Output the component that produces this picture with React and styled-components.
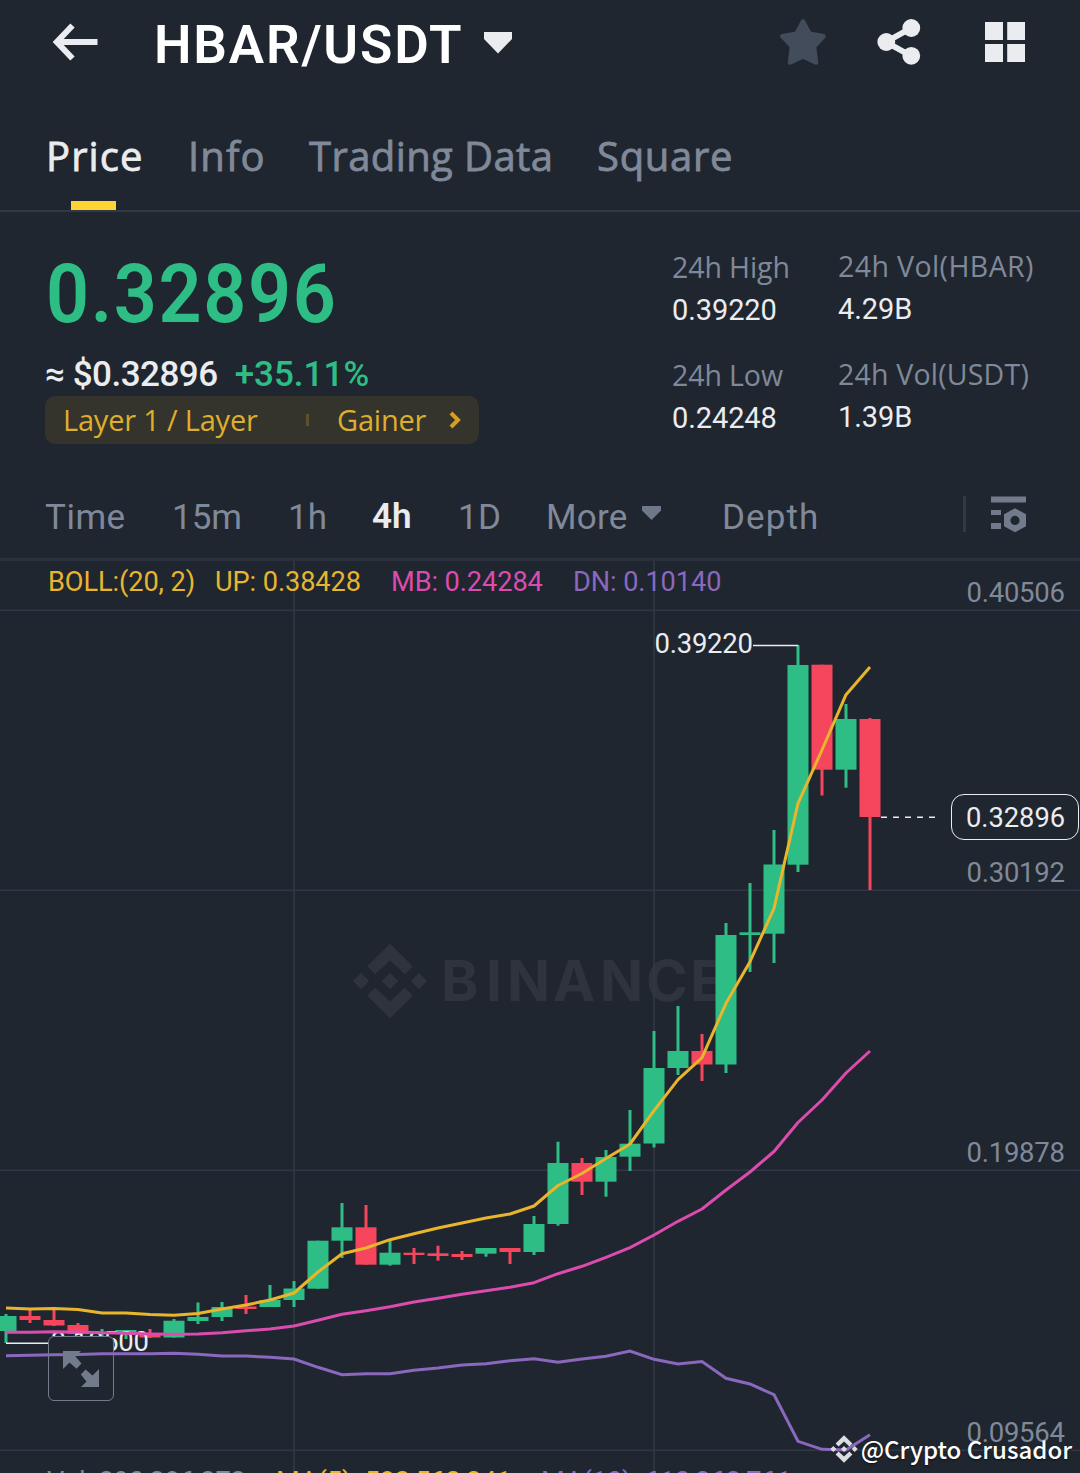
import React from "react";
import styled, { createGlobalStyle, css } from "styled-components";

const colors = {
  bg: "#1f262f",
  line: "#313744",
  text: "#eaecef",
  muted: "#808999",
  green: "#2ebd85",
  red: "#f6465d",
  yellow: "#e9b52c",
  pink: "#dc4bae",
  purple: "#8a68bd",
};

// [side, body top, body bottom, wick top, wick bottom]
const candles = [
  ["up", 1316, 1331, 1314, 1343],
  ["down", 1316, 1320, 1310, 1323],
  ["down", 1320, 1325.5, 1310, 1326],
  ["down", 1325, 1334, 1323, 1335],
  ["up", 1332, 1334, 1329, 1336],
  ["up", 1330, 1332.5, 1330, 1339],
  ["down", 1333, 1337.5, 1329, 1338],
  ["up", 1320.7, 1337.5, 1319, 1337.5],
  ["up", 1317, 1321, 1302.5, 1324],
  ["up", 1307, 1317, 1302, 1321],
  ["down", 1306.5, 1309, 1295, 1314],
  ["up", 1300, 1307, 1285, 1307],
  ["up", 1288.5, 1300, 1281, 1307],
  ["up", 1240.7, 1288.7, 1240.7, 1288.7],
  ["up", 1227.3, 1240.7, 1203, 1258],
  ["down", 1227.3, 1264.7, 1205, 1264.7],
  ["up", 1252.7, 1264.7, 1241, 1265.7],
  ["down", 1252.7, 1255, 1248, 1264],
  ["down", 1253.3, 1256, 1245.7, 1260.7],
  ["down", 1254, 1257, 1251, 1260],
  ["up", 1248, 1253.7, 1248, 1256.7],
  ["down", 1248, 1252, 1248, 1264],
  ["up", 1224, 1252, 1216, 1255],
  ["up", 1163, 1224, 1141.7, 1225.7],
  ["down", 1163, 1181.7, 1158, 1195],
  ["up", 1157, 1181.7, 1150, 1196.7],
  ["up", 1143.7, 1156.7, 1110, 1171],
  ["up", 1068, 1143.5, 1031, 1147.5],
  ["up", 1051, 1068, 1006, 1075],
  ["down", 1051, 1064.5, 1034, 1081],
  ["up", 935, 1064.5, 923, 1073],
  ["up", 932.3, 935, 883, 972],
  ["up", 864.5, 933.7, 830, 963],
  ["up", 665, 864.7, 645, 872],
  ["down", 664.7, 769.7, 664.7, 795.5],
  ["up", 719, 769.7, 704, 787.7],
  ["down", 719, 817, 718, 890],
];

const upper = [
  1308, 1309, 1308.5, 1309.5, 1313, 1313, 1314.5, 1315.3, 1313.5, 1309, 1305,
  1300, 1293, 1272, 1253.7, 1248, 1239.7, 1233.7, 1228, 1223, 1218, 1214, 1206,
  1185.5, 1173.5, 1158.5, 1144, 1110.7, 1079.7, 1057.7, 1003.3, 961.7, 908.3,
  803.3, 750, 694.7, 667,
];

const middle = [
  1332.3, 1332.3, 1331.7, 1332, 1332.7, 1333.3, 1334, 1334.3, 1334, 1332.7,
  1330.7, 1329, 1326, 1320.3, 1314.3, 1310.7, 1306.7, 1302, 1298.3, 1294.3,
  1290.7, 1287.3, 1282.7, 1273.7, 1266.3, 1257.3, 1247.7, 1235, 1221.3, 1209,
  1190, 1172, 1151.5, 1122.5, 1100, 1073, 1051,
];

const lower = [
  1355.7, 1355.3, 1354.7, 1354.5, 1353.7, 1353.7, 1353.7, 1353.3, 1354.3, 1356,
  1356, 1357.3, 1359, 1367.3, 1374.7, 1373.7, 1373.7, 1370.3, 1368, 1365,
  1363.7, 1360.7, 1358.7, 1362.3, 1359, 1356.3, 1351, 1359.3, 1364, 1361.5,
  1378.3, 1384, 1394.7, 1441.3, 1449.3, 1450, 1434.7,
];

const axis = [
  [610, "0.40506"],
  [890, "0.30192"],
  [1170, "0.19878"],
  [1450, "0.09564"],
];

const candleX = (i) => 6 + i * 24;
const toPoints = (values) => values.map((y, i) => `${candleX(i)},${y}`).join(" ");

function BinanceMark() {
  return (
    <>
      <path d="M0-37.3 22.8-14.8 14.8-6.8 0-20.5-14.8-6.8-22.8-14.8Z" />
      <path d="M0 37.3 22.8 14.8 14.8 6.8 0 20.5-14.8 6.8-22.8 14.8Z" />
      <path d="M0-8.2 8.2 0 0 8.2-8.2 0Z" />
      <path d="M-29-8.2-20.8 0-29 8.2-37.2 0Z" />
      <path d="M29-8.2 37.2 0 29 8.2 20.8 0Z" />
    </>
  );
}

function Header() {
  return (
    <HeaderBar>
      <BackIcon width="46" height="38" viewBox="0 0 46 38">
        <path d="M20.5 2.5 4.8 19 20.5 35.5M5 19H45.5" fill="none" stroke={colors.text} strokeWidth="6" />
      </BackIcon>
      <Pair>HBAR/USDT</Pair>
      <PairCaret width="28" height="22" viewBox="0 0 28 22">
        <path d="M0 0H28V7L14 21.5 0 7Z" fill={colors.text} />
      </PairCaret>
      <HeaderIcons>
        <svg width="46" height="46" viewBox="0 0 46 46">
          <path
            d="M23 2.5 29.6 14.8 43.5 17.2 34 27.6 36 43.5 23 37.4 10 43.5 12 27.6 2.5 17.2 16.4 14.8Z"
            fill="#434c5a"
            stroke="#434c5a"
            strokeWidth="4.5"
            strokeLinejoin="round"
          />
        </svg>
        <svg width="44" height="46" viewBox="0 0 44 46">
          <path d="M34.2 9 9 23 34.2 37" fill="none" stroke={colors.text} strokeWidth="6" />
          <g fill={colors.text}>
            <circle cx="9.3" cy="23" r="8.9" />
            <circle cx="34.3" cy="9" r="8.9" />
            <circle cx="34.3" cy="36.8" r="8.9" />
          </g>
        </svg>
        <svg width="40" height="40" viewBox="0 0 40 40" fill={colors.text}>
          <path d="M0 0H18V18H0ZM22.2 0H40V18H22.2ZM0 22H18V40H0ZM22.2 22H40V40H22.2Z" />
        </svg>
      </HeaderIcons>
    </HeaderBar>
  );
}

function Summary() {
  return (
    <SummaryWrap>
      <div>
        <LastPrice>0.32896</LastPrice>
        <FiatRow>
          <Fiat>≈ $0.32896</Fiat>
          <Change>+35.11%</Change>
        </FiatRow>
        <Tags>
          <Tag $width={229}>Layer 1 / Layer</Tag>
          <TagDivider />
          <Tag>Gainer</Tag>
          <svg width="12" height="18" viewBox="0 0 12 18">
            <path d="M2 2 9 9 2 16" fill="none" stroke="#d69f21" strokeWidth="4" />
          </svg>
        </Tags>
      </div>
      <Stats>
        <Stat>
          <StatLabel>24h High</StatLabel>
          <StatValue>0.39220</StatValue>
        </Stat>
        <Stat $raised>
          <StatLabel $track="0.4px">24h Vol(HBAR)</StatLabel>
          <StatValue>4.29B</StatValue>
        </Stat>
        <Stat>
          <StatLabel>24h Low</StatLabel>
          <StatValue>0.24248</StatValue>
        </Stat>
        <Stat $raised>
          <StatLabel $track="0.2px">24h Vol(USDT)</StatLabel>
          <StatValue>1.39B</StatValue>
        </Stat>
      </Stats>
    </SummaryWrap>
  );
}

function Intervals() {
  return (
    <IntervalBar>
      <Interval $track="0.5px">Time</Interval>
      <Interval>15m</Interval>
      <Interval>1h</Interval>
      <Interval $active>4h</Interval>
      <Interval $track="0.4px">1D</Interval>
      <Interval $track="0.2px">More</Interval>
      <MoreCaret width="19" height="14" viewBox="0 0 19 14">
        <path d="M0 0H19V4.5L9.5 14 0 4.5Z" fill="#6f7888" />
      </MoreCaret>
      <Interval $track="1.1px">Depth</Interval>
      <IntervalDivider />
      <svg width="36" height="37" viewBox="0 0 36 37" fill="#727b8b">
        <path d="M0 .5H35V6.5H0ZM0 14H10V19H0ZM0 27H10V33H0Z" />
        <path
          fillRule="evenodd"
          d="M24 12.3 35 18.3V30.3L24 36.3 13 30.3V18.3ZM24 19.8A4.6 4.6 0 1 0 24 29 4.6 4.6 0 1 0 24 19.8Z"
        />
      </svg>
    </IntervalBar>
  );
}

function Chart() {
  return (
    <ChartWrap>
      <Plot width="1080" height="915" viewBox="0 558 1080 915">
        <g fill="#2f333e">
          <g transform="translate(390 981)">
            <BinanceMark />
          </g>
          <Brand x="441 486 507 553 600 646 690" y="1001.3">
            BINANCE
          </Brand>
        </g>
        <g stroke={colors.line} strokeWidth="1.6">
          <path d="M0 559.5H1080" strokeWidth="3" stroke="#2b313c" />
          {axis.map(([y]) => (
            <path key={y} d={`M0 ${y + 0.3}H1080`} />
          ))}
          <path d="M294 561V1473M654 561V1473" />
        </g>
        {axis.map(([y, label]) => (
          <AxisText key={y} x="966.5" y={y - 8} textLength="98.5">
            {label}
          </AxisText>
        ))}
        {candles.map(([side, top, bottom, high, low], i) => (
          <g key={i} fill={side === "up" ? colors.green : colors.red}>
            <rect x={candleX(i) - 1.5} y={high} width="3" height={low - high} />
            <rect x={candleX(i) - 10.5} y={top} width="21" height={bottom - top} />
          </g>
        ))}
        <g fill="none" stroke={colors.text} strokeWidth="1.6">
          <path d="M753 645.5H798M6 1343.3H50" />
          <path d="M881 817.2H936" strokeDasharray="6 6" />
        </g>
        <AxisText $bright x="654.5" y="653" textLength="98.5">
          0.39220
        </AxisText>
        <AxisText $bright x="50.5" y="1351" textLength="98.5">
          0.10500
        </AxisText>
        <g fill="none" strokeWidth="3" strokeLinejoin="round">
          <polyline points={toPoints(upper)} stroke={colors.yellow} />
          <polyline points={toPoints(middle)} stroke={colors.pink} />
        </g>
        <rect x="48" y="1336" width="66" height="65" rx="6" fill={colors.bg} />
        <polyline points={toPoints(lower)} fill="none" stroke={colors.purple} strokeWidth="3" />
      </Plot>
      <Legend>
        <LegendItem $color={colors.yellow}>BOLL:(20, 2)</LegendItem>
        <LegendItem $color={colors.yellow}>UP: 0.38428</LegendItem>
        <LegendItem $color={colors.pink}>MB: 0.24284</LegendItem>
        <LegendItem $color={colors.purple}>DN: 0.10140</LegendItem>
      </Legend>
      <PriceBadge>0.32896</PriceBadge>
      <ExpandButton>
        <svg width="36" height="36" viewBox="0 0 36 36" fill="#727b8b">
          <path d="M0 0H18L12.5 5.5 18.5 12.5 13.5 17.8 6.5 11.5 0 18Z" />
          <path d="M36 36H18L23.5 30.5 17.8 23.5 22.6 18.6 29.5 24.5 36 18Z" />
        </svg>
      </ExpandButton>
      <VolumeRow>
        <LegendItem $color={colors.muted}>Vol: 390,386,373</LegendItem>
        <LegendItem $color={colors.yellow}>MA(5): 583,563,341</LegendItem>
        <LegendItem $color={colors.purple}>MA(10): 613,263,761</LegendItem>
      </VolumeRow>
      <Credit>
        <svg width="28" height="28" viewBox="-38 -38 76 76" fill="#dcdddf">
          <BinanceMark />
        </svg>
        @Crypto Crusador
      </Credit>
    </ChartWrap>
  );
}

function App() {
  return (
    <Page>
      <GlobalStyle />
      <Header />
      <Tabs>
        <Tab $active>Price</Tab>
        <Tab $track="1.1px">Info</Tab>
        <Tab>Trading Data</Tab>
        <Tab $track="0.7px">Square</Tab>
      </Tabs>
      <Summary />
      <Intervals />
      <Chart />
    </Page>
  );
}

export default App;

const GlobalStyle = createGlobalStyle`
  * {
    box-sizing: border-box;
  }
  body {
    margin: 0;
    background: ${colors.bg};
  }
  svg {
    display: block;
    flex: none;
  }
`;

const Page = styled.div`
  width: 1080px;
  height: 1473px;
  overflow: hidden;
  display: flex;
  flex-direction: column;
  background: ${colors.bg};
  color: ${colors.text};
  font-family: Roboto, sans-serif;
  white-space: nowrap;
`;

const HeaderBar = styled.header`
  display: flex;
  align-items: center;
  height: 84px;
  padding: 0 55px 0 52px;
`;

const BackIcon = styled.svg`
  margin-right: 56px;
`;

const Pair = styled.h1`
  margin: 0;
  width: 330px;
  color: #fff;
  font-size: 53px;
  font-weight: 600;
  line-height: 84px;
  letter-spacing: 1.8px;
  padding-top: 5px;
`;

const PairCaret = styled.svg`
  margin-top: 2px;
`;

const HeaderIcons = styled.div`
  display: flex;
  align-items: center;
  margin-left: auto;

  svg + svg {
    margin-left: 51px;
  }
  svg:last-child {
    margin-left: 64px;
  }
`;

const Tabs = styled.nav`
  display: grid;
  grid-template-columns: 142px 121px 288px auto;
  height: 128px;
  padding: 38px 0 0 46px;
  border-bottom: 2px solid #323844;
`;

const Tab = styled.div`
  position: relative;
  color: ${({ $active }) => ($active ? colors.text : colors.muted)};
  font-family: "Open Sans", sans-serif;
  font-size: 40px;
  font-weight: 500;
  line-height: 68px;
  letter-spacing: ${({ $active, $track }) => ($active ? "1.1px" : $track || "0.4px")};
  -webkit-text-stroke: 0.8px currentColor;

  ${({ $active }) =>
    $active &&
    css`
      &::after {
        content: "";
        position: absolute;
        left: 25px;
        bottom: 0;
        width: 45px;
        height: 9px;
        background: #fcd535;
      }
    `}
`;

const SummaryWrap = styled.section`
  display: flex;
  justify-content: space-between;
  height: 258px;
  padding: 36px 0 0 45px;
`;

const LastPrice = styled.div`
  color: ${colors.green};
  font-size: 82px;
  font-weight: 600;
  line-height: 92px;
  letter-spacing: 1.8px;
  padding-left: 1px;
  transform: scaleX(0.92);
  transform-origin: left;
`;

const FiatRow = styled.div`
  display: flex;
  gap: 17px;
  height: 56px;
  font-size: 35px;
  font-weight: 500;
  line-height: 69px;
`;

const Fiat = styled.span`
  color: ${colors.text};
  letter-spacing: -0.5px;
`;

const Change = styled.span`
  color: ${colors.green};
`;

const Tags = styled.div`
  display: flex;
  align-items: center;
  width: 434px;
  height: 48px;
  padding: 0 18px;
  border-radius: 10px;
  background: #35342c;
`;

const Tag = styled.span`
  width: ${({ $width }) => ($width ? `${$width}px` : "auto")};
  color: #dfae2c;
  font-family: "Open Sans", sans-serif;
  font-size: 29px;
  line-height: 48px;
  letter-spacing: -0.2px;

  & + svg {
    margin-left: auto;
  }
`;

const TagDivider = styled.span`
  width: 3px;
  height: 12px;
  margin: 0 28px 0 14px;
  background: #5d512b;
`;

const Stats = styled.div`
  display: grid;
  grid-template-columns: 166px 242px;
  grid-auto-rows: 108px;
`;

const Stat = styled.div`
  padding-top: ${({ $raised }) => ($raised ? 0 : 1)}px;
`;

const StatLabel = styled.div`
  color: ${colors.muted};
  font-family: "Open Sans", sans-serif;
  font-size: 28.5px;
  line-height: 36px;
  letter-spacing: ${({ $track }) => $track || "-0.1px"};
`;

const StatValue = styled.div`
  color: ${colors.text};
  font-size: 29px;
  line-height: 50px;
  letter-spacing: -0.1px;
`;

const IntervalBar = styled.nav`
  display: grid;
  grid-template-columns: 127px 116px 84px 86px 88px 96px 80px 241px 28px auto;
  align-items: center;
  height: 88px;
  padding-left: 45px;
`;

const Interval = styled.span`
  color: ${({ $active }) => ($active ? colors.text : colors.muted)};
  font-size: 35px;
  font-weight: ${({ $active }) => ($active ? 600 : 400)};
  line-height: 60px;
  letter-spacing: ${({ $track }) => $track || 0};
  padding-top: ${({ $active }) => ($active ? 5 : 7)}px;
`;

const MoreCaret = styled.svg`
  margin-bottom: 2px;
`;

const IntervalDivider = styled.span`
  width: 3px;
  height: 36px;
  background: #323945;
`;

const ChartWrap = styled.section`
  position: relative;
  flex: 1;
  overflow: hidden;
`;

const Plot = styled.svg`
  display: block;
`;

const Brand = styled.text`
  font-family: Inter, sans-serif;
  font-size: 56.5px;
  font-weight: 700;
`;

const AxisText = styled.text`
  fill: ${({ $bright }) => ($bright ? colors.text : colors.muted)};
  font-size: 27.5px;
`;

const Legend = styled.div`
  position: absolute;
  top: 7px;
  left: 48px;
  display: grid;
  grid-template-columns: 167px 176px 182px auto;
`;

const LegendItem = styled.span`
  color: ${({ $color }) => $color};
  font-size: 27.2px;
  line-height: 34px;
  letter-spacing: -0.1px;
`;

const PriceBadge = styled.div`
  position: absolute;
  top: 236px;
  right: 1px;
  width: 128px;
  height: 46px;
  padding-left: 1px;
  border: 1.6px solid ${colors.text};
  border-radius: 13px;
  font-size: 27.3px;
  line-height: 47px;
  text-align: center;
`;

const ExpandButton = styled.div`
  position: absolute;
  top: 778px;
  left: 48px;
  display: flex;
  width: 66px;
  height: 65px;
  padding: 14px 0 0 14px;
  border: 1.5px solid #727b8b;
  border-radius: 6px;
`;

const VolumeRow = styled.div`
  position: absolute;
  top: 907px;
  left: 47px;
  display: grid;
  grid-template-columns: 229px 265px auto;
`;

const Credit = styled.div`
  position: absolute;
  right: 8px;
  bottom: 4px;
  display: flex;
  align-items: center;
  gap: 3px;
  color: #fff;
  font-family: "Noto Sans CJK SC", sans-serif;
  font-size: 24px;
  font-weight: 500;
  line-height: 40px;
  text-shadow: 0 1px 2px rgba(0, 0, 0, 0.6);
`;
